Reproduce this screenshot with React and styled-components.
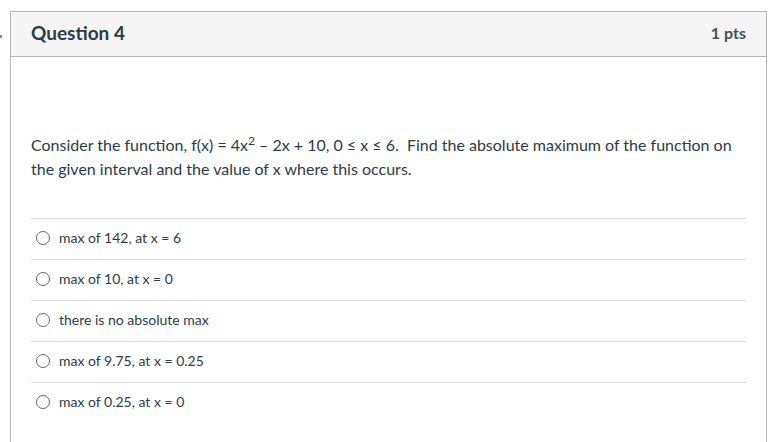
import React from "react";
import styled, { createGlobalStyle } from "styled-components";

const GlobalStyle = createGlobalStyle`
  html, body {
    margin: 0;
    padding: 0;
    background: #ffffff;
    font-family: Lato, "Open Sans", sans-serif;
    color: #2d3b45;
  }
`;

const answers = [
  "max of 142, at x = 6",
  "max of 10, at x = 0",
  "there is no absolute max",
  "max of 9.75, at x = 0.25",
  "max of 0.25, at x = 0",
];

const App = () => {
  return (
    <>
      <GlobalStyle />
      <Page>
        <FlagMark />
        <Card>
          <Header>
            <Title>Question 4</Title>
            <Points>1 pts</Points>
          </Header>
          <Body>
            <QuestionText>
              Consider the function, f(x) = 4x<sup>2</sup> – 2x + 10, 0 ≤ x ≤ 6.&nbsp; Find the
              absolute maximum of the function on the given interval and the value of x where
              this occurs.
            </QuestionText>
            <AnswerList>
              {answers.map((a) => (
                <AnswerRow key={a}>
                  <Radio />
                  <AnswerLabel>{a}</AnswerLabel>
                </AnswerRow>
              ))}
            </AnswerList>
          </Body>
        </Card>
      </Page>
    </>
  );
};

export default App;

const Page = styled.div`
  position: relative;
  padding: 11px 12px 0 10px;
  height: 442px;
  box-sizing: border-box;
  overflow: hidden;
`;

const FlagMark = styled.div`
  position: absolute;
  left: 0;
  top: 35px;
  width: 2px;
  height: 3px;
  background: #6d8fb0;
`;

const Card = styled.div`
  width: 757px;
  box-sizing: border-box;
  border: 1px solid #b6b6b6;
  border-bottom: none;
  height: 460px;
`;

const Header = styled.div`
  display: flex;
  justify-content: space-between;
  align-items: center;
  height: 45px;
  padding: 0 20px 3px 20px;
  box-sizing: border-box;
  background: #f5f5f5;
  border-bottom: 1px solid #b6b6b6;
`;

const Title = styled.h2`
  margin: 0;
  font-size: 19px;
  font-weight: 700;
  color: #2d3b45;
`;

const Points = styled.div`
  font-size: 16px;
  font-weight: 700;
  color: #4a4f55;
`;

const Body = styled.div`
  padding: 76px 20px 0 20px;
`;

const QuestionText = styled.p`
  margin: 0;
  font-size: 16px;
  line-height: 24px;
  color: #2d3b45;

  sup {
    font-size: 12px;
    line-height: 0;
    vertical-align: 6px;
  }
`;

const AnswerList = styled.div`
  margin-top: 37px;
`;

const AnswerRow = styled.div`
  display: flex;
  align-items: center;
  height: 41px;
  border-top: 1px solid #dddddd;
  padding: 0 0 3px 5px;
  box-sizing: border-box;
`;

const Radio = styled.span`
  width: 14px;
  height: 14px;
  box-sizing: border-box;
  border: 1.5px solid #62676c;
  border-radius: 50%;
  flex-shrink: 0;
`;

const AnswerLabel = styled.span`
  margin-left: 9px;
  font-size: 14px;
  color: #2d3b45;
`;
